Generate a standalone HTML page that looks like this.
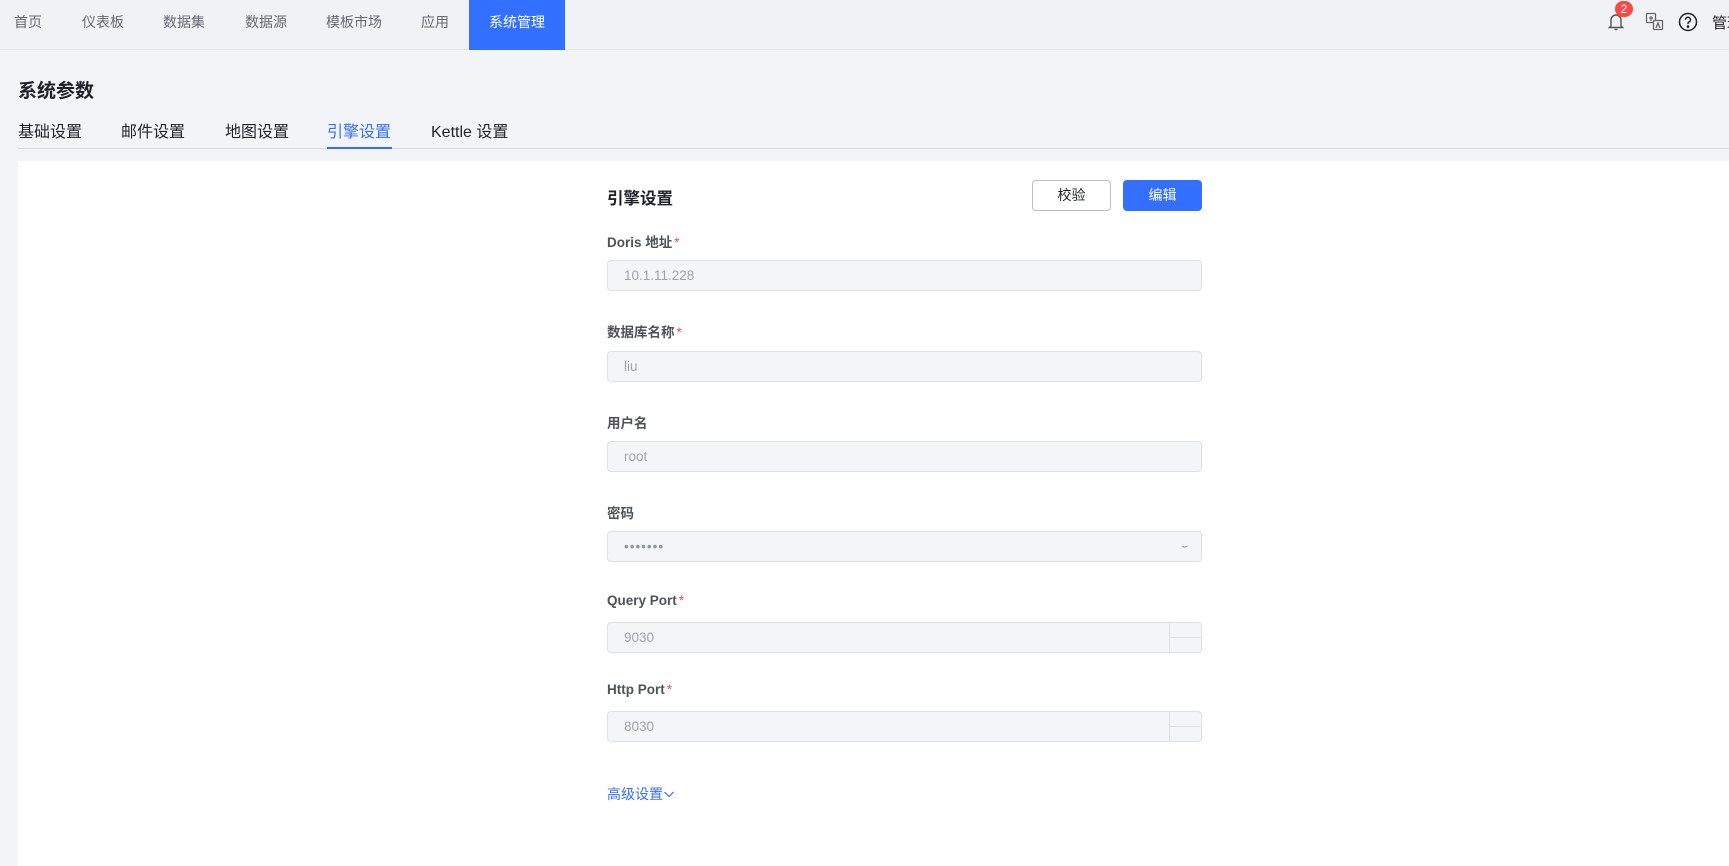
<!DOCTYPE html>
<html><head><meta charset="utf-8"><style>
*{box-sizing:border-box;margin:0;padding:0}
body{width:1729px;height:866px;overflow:hidden;background:#f3f4f7;font-family:"Liberation Sans","Noto Sans CJK SC",sans-serif;position:relative;color:#1f2329}
.abs{position:absolute;white-space:nowrap}
.nav{top:0;left:0;width:1729px;height:50px;background:#f1f2f6;border-bottom:1px solid #e4e6eb}
.ni{top:0;height:50px;line-height:45px;font-size:14px;color:#646a73}
.act{background:#3370ff;color:#fff;left:469px;width:96px;text-align:center}
.tab{top:118px;font-size:16px;color:#1f2329}
.panel{left:18px;top:161px;width:1711px;height:705px;background:#fff}
.lbl{left:607px;font-size:13.5px;font-weight:bold;color:#4e5359}
.lbl i{color:#f54a45;font-style:normal;font-weight:normal;margin-left:2px}
.inp{left:607px;width:595px;height:31px;background:#f4f5f7;border:1px solid #dee0e3;border-radius:4px;font-size:13.5px;color:#a0a4aa;padding-left:16px;line-height:29px}
.spin{position:absolute;right:0;top:0;width:32px;height:29px;border-left:1px solid #dee0e3}
.spin:after{content:"";position:absolute;left:0;right:0;top:14px;border-top:1px solid #dee0e3}
.btn{top:180px;height:31px;width:79px;border-radius:4px;font-size:14px;text-align:center;line-height:29px}
</style></head><body>
<div class="abs nav"></div>
<div class="abs ni" style="left:14px">首页</div>
<div class="abs ni" style="left:82px">仪表板</div>
<div class="abs ni" style="left:163px">数据集</div>
<div class="abs ni" style="left:245px">数据源</div>
<div class="abs ni" style="left:326px">模板市场</div>
<div class="abs ni" style="left:421px">应用</div>
<div class="abs ni act">系统管理</div>
<svg class="abs" style="left:1607px;top:12px" width="18" height="20" viewBox="0 0 18 20" fill="none" stroke="#555" stroke-width="1.4"><path d="M4 14V8a5 5 0 0 1 10 0v6l1.5 1.5h-13Z"/><path d="M7.5 17.5h3"/></svg>
<div class="abs" style="left:1615px;top:1px;width:18px;height:16px;border-radius:8px;background:#f54a45;color:#fff;font-size:12px;text-align:center;line-height:16px">2</div>
<svg class="abs" style="left:1645px;top:12px" width="19" height="19" viewBox="0 0 19 19" fill="none" stroke="#666" stroke-width="1.3"><rect x="1.5" y="1.5" width="9" height="9" rx="1"/><rect x="8.5" y="8.5" width="9" height="9" rx="1" fill="#f1f2f6"/><path d="M4 6h4M6 4v5M11 16l2-5 2 5"/></svg>
<svg class="abs" style="left:1678px;top:12px" width="20" height="20" viewBox="0 0 20 20" fill="none" stroke="#222" stroke-width="1.5"><circle cx="10" cy="10" r="8.5"/><path d="M7.5 7.8a2.5 2.5 0 1 1 3.3 2.3c-.6.3-.8.7-.8 1.4v.6"/><circle cx="10" cy="14.6" r=".6" fill="#222"/></svg>
<div class="abs" style="left:1712px;top:12px;font-size:15px;color:#222">管理员</div>
<div class="abs" style="left:18px;top:76px;font-size:19px;font-weight:bold;color:#1f2329">系统参数</div>
<div class="abs" style="left:18px;top:148px;width:1711px;border-top:1px solid #d8dade"></div>
<div class="abs tab" style="left:18px">基础设置</div>
<div class="abs tab" style="left:121px">邮件设置</div>
<div class="abs tab" style="left:225px">地图设置</div>
<div class="abs tab" style="left:327px;color:#3370ff">引擎设置</div>
<div class="abs tab" style="left:431px">Kettle 设置</div>
<div class="abs" style="left:327px;top:147px;width:65px;height:2px;background:#3370ff"></div>
<div class="abs panel"></div>
<div class="abs" style="left:607px;top:185px;font-size:16.5px;font-weight:bold;color:#1f2329">引擎设置</div>
<div class="abs btn" style="left:1032px;border:1px solid #bbbfc4;color:#1f2329;background:#fff">校验</div>
<div class="abs btn" style="left:1123px;background:#3370ff;color:#fff;border:1px solid #3370ff">编辑</div>
<div class="abs lbl" style="top:231px">Doris 地址<i>*</i></div>
<div class="abs inp" style="top:260px">10.1.11.228</div>
<div class="abs lbl" style="top:321px">数据库名称<i>*</i></div>
<div class="abs inp" style="top:351px">liu</div>
<div class="abs lbl" style="top:412px">用户名</div>
<div class="abs inp" style="top:441px">root</div>
<div class="abs lbl" style="top:502px">密码</div>
<div class="abs inp" style="top:531px;color:#8f959e;letter-spacing:1px">•••••••<span style="position:absolute;right:12px;top:0;font-size:10px">⌣</span></div>
<div class="abs lbl" style="top:593px">Query Port<i>*</i></div>
<div class="abs inp" style="top:622px">9030<div class="spin"></div></div>
<div class="abs lbl" style="top:682px">Http Port<i>*</i></div>
<div class="abs inp" style="top:711px">8030<div class="spin"></div></div>
<div class="abs" style="left:607px;top:784px;font-size:14px;color:#3370ff">高级设置<svg width="12" height="10" viewBox="0 0 12 10" fill="none" stroke="#3370ff" stroke-width="1.2"><path d="M1.5 3l4.5 4.5L10.5 3"/></svg></div>
</body></html>
